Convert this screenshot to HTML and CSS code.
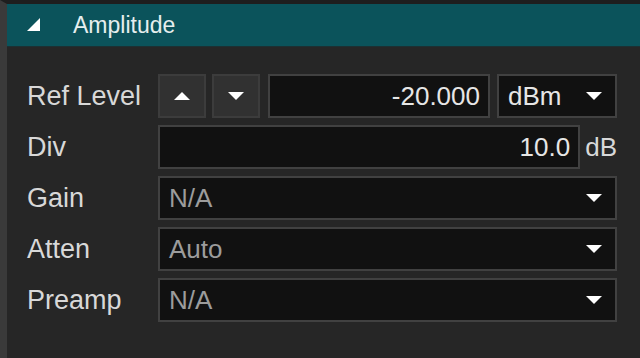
FILE: index.html
```html
<!DOCTYPE html>
<html lang="en">
<head>
    <meta charset="UTF-8">
    <meta name="viewport" content="width=device-width, initial-scale=1.0">
    <title>Amplitude</title>
    <link rel="stylesheet" href="styles.css">
</head>
<body>
    <div class="panel">
        <!-- Section header -->
        <div class="panel-header">
            <svg class="collapse-icon" width="14" height="15" viewBox="0 0 14 15">
                <polygon points="0,14 13,14 13,1" fill="#ffffff"/>
            </svg>
            <span class="panel-title">Amplitude</span>
        </div>

        <!-- Settings grid -->
        <div class="settings">
            <div class="label">Ref Level</div>
            <div class="controls">
                <button class="step-btn">
                    <svg width="16" height="8" viewBox="0 0 16 8"><polygon points="0,8 16,8 8,0" fill="#ffffff"/></svg>
                </button>
                <button class="step-btn step-gap">
                    <svg width="16" height="8" viewBox="0 0 16 8"><polygon points="0,0 16,0 8,8" fill="#ffffff"/></svg>
                </button>
                <div class="field ref-field">-20.000</div>
                <div class="select unit-select">
                    <span>dBm</span>
                    <svg class="arrow" width="16" height="8" viewBox="0 0 16 8"><polygon points="0,0 16,0 8,8" fill="#ffffff"/></svg>
                </div>
            </div>

            <div class="label">Div</div>
            <div class="controls">
                <div class="field div-field">10.0</div>
                <span class="unit">dB</span>
            </div>

            <div class="label">Gain</div>
            <div class="select muted">
                <span>N/A</span>
                <svg class="arrow" width="16" height="8" viewBox="0 0 16 8"><polygon points="0,0 16,0 8,8" fill="#ffffff"/></svg>
            </div>

            <div class="label">Atten</div>
            <div class="select muted">
                <span>Auto</span>
                <svg class="arrow" width="16" height="8" viewBox="0 0 16 8"><polygon points="0,0 16,0 8,8" fill="#ffffff"/></svg>
            </div>

            <div class="label">Preamp</div>
            <div class="select muted">
                <span>N/A</span>
                <svg class="arrow" width="16" height="8" viewBox="0 0 16 8"><polygon points="0,0 16,0 8,8" fill="#ffffff"/></svg>
            </div>
        </div>
    </div>
</body>
</html>
```
FILE: styles.css
```css
/* General page styles */
html, body {
    margin: 0;
    padding: 0;
    height: 100%;
}

body {
    background-color: #1f1f1f;
    font-family: "Liberation Sans", Arial, sans-serif;
    overflow: hidden;
}

.panel {
    height: 354px;
    border-top: 4px solid #1e1e1e;
    border-left: 7px solid #3a3a3a;
    background-color: #262626;
}

/* Header bar */
.panel-header {
    height: 43px;
    display: flex;
    align-items: center;
    padding-left: 20px;
    background-color: #0b535b;
    border-bottom: 1px solid #1c3033;
    box-sizing: border-box;
}

.collapse-icon {
    margin-top: -2px;
}

.panel-title {
    margin-left: 32px;
    color: #e6eeee;
    font-size: 23px;
}

/* Settings grid */
.settings {
    display: grid;
    grid-template-columns: 131px 1fr;
    grid-auto-rows: 44px;
    row-gap: 7px;
    padding: 27px 23px 0 20px;
}

.label {
    display: flex;
    align-items: center;
    color: #d8d8d8;
    font-size: 27px;
}

.controls {
    display: flex;
    align-items: stretch;
}

.step-btn {
    width: 48px;
    margin-right: 6px;
    padding: 0;
    display: flex;
    align-items: center;
    justify-content: center;
    background-color: #313131;
    border: 2px solid #3c3c3c;
}

.step-gap {
    margin-right: 8px;
}

.field,
.select {
    display: flex;
    align-items: center;
    background-color: #111111;
    border: 2px solid #414141;
    box-sizing: border-box;
    font-size: 26px;
    color: #e6e6e6;
}

.field {
    justify-content: flex-end;
    padding-right: 8px;
}

.ref-field {
    width: 222px;
    margin-right: 7px;
}

.div-field {
    flex: 1;
}

.unit {
    display: flex;
    align-items: center;
    margin-left: 5px;
    color: #d8d8d8;
    font-size: 26px;
}

.select {
    justify-content: space-between;
    padding: 0 13px 0 9px;
}

.unit-select {
    flex: 1;
}

.muted span {
    color: #9c9c9c;
}

.arrow {
    flex-shrink: 0;
}
```
